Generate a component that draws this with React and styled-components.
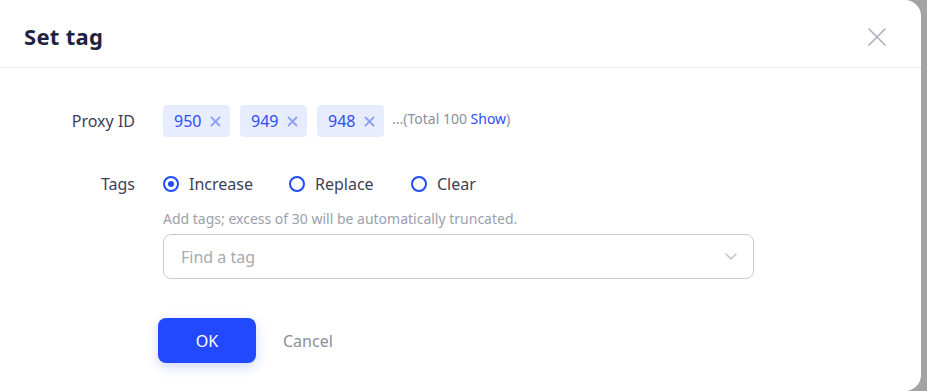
import React from "react";
import styled, { createGlobalStyle } from "styled-components";

const Global = createGlobalStyle`
  html, body { margin: 0; padding: 0; background: #a3a3a3; }
  body { font-family: "Noto Sans", "Open Sans", sans-serif; overflow: hidden; }
`;

const CloseIcon = () => (
  <svg width="20" height="20" viewBox="0 0 20 20" fill="none" stroke="#a9aebb" strokeWidth="1.6" strokeLinecap="round">
    <path d="M2 2L18 18M18 2L2 18" />
  </svg>
);

const SmallX = () => (
  <svg width="11" height="11" viewBox="0 0 11 11" fill="none" stroke="#8ea2f6" strokeWidth="1.8" strokeLinecap="round">
    <path d="M1.5 1.5L9.5 9.5M9.5 1.5L1.5 9.5" />
  </svg>
);

const Chevron = () => (
  <svg width="14" height="9" viewBox="0 0 14 9" fill="none" stroke="#c3c5cc" strokeWidth="1.6" strokeLinecap="round" strokeLinejoin="round">
    <path d="M2 2L7 7L12 2" />
  </svg>
);

const App = () => {
  return (
    <>
      <Global />
      <Dialog>
        <Header>
          <Title>Set tag</Title>
          <CloseBtn><CloseIcon /></CloseBtn>
        </Header>
        <Body>
          <Row>
            <Label>Proxy ID</Label>
            <Field>
              <TagList>
                {["950", "949", "948"].map((id) => (
                  <Tag key={id}>
                    {id}
                    <SmallX />
                  </Tag>
                ))}
                <Total>
                  ...(Total 100 <LinkText>Show</LinkText>)
                </Total>
              </TagList>
            </Field>
          </Row>
          <Row $top={36}>
            <Label>Tags</Label>
            <Field>
              <Radios>
                <RadioItem $w={126}><Radio $checked />Increase</RadioItem>
                <RadioItem $w={122}><Radio />Replace</RadioItem>
                <RadioItem><Radio />Clear</RadioItem>
              </Radios>
            </Field>
          </Row>
          <SubField>
            <Help>Add tags; excess of 30 will be automatically truncated.</Help>
            <Select>
              <Placeholder>Find a tag</Placeholder>
              <Chevron />
            </Select>
          </SubField>
          <Footer>
            <Primary>OK</Primary>
            <Ghost>Cancel</Ghost>
          </Footer>
        </Body>
      </Dialog>
    </>
  );
};

export default App;

const Dialog = styled.div`
  width: 921px;
  height: 391px;
  background: #fff;
  border-radius: 0 16px 16px 0;
  box-sizing: border-box;
  overflow: hidden;
`;

const Header = styled.div`
  height: 68px;
  border-bottom: 1px solid #e9e9ec;
  display: flex;
  align-items: center;
  justify-content: space-between;
  padding: 0 34px 0 24px;
  box-sizing: border-box;
`;

const Title = styled.h1`
  margin: 0;
  font-size: 22px;
  font-weight: 700;
  color: #1e2340;
  padding-top: 4px;
  letter-spacing: 0.3px;
`;

const CloseBtn = styled.div`
  display: flex;
  padding-top: 6px;
`;

const Body = styled.div`
  padding-top: 37px;
`;

const Row = styled.div`
  display: flex;
  align-items: center;
  margin-top: ${(p) => (p.$top ? p.$top : 0)}px;
`;

const Label = styled.div`
  width: 135px;
  text-align: right;
  font-size: 16px;
  color: #3c4156;
  flex-shrink: 0;
`;

const Field = styled.div`
  margin-left: 28px;
  flex: 1;
`;

const TagList = styled.div`
  display: flex;
  align-items: center;
  gap: 10px;
`;

const Tag = styled.div`
  display: flex;
  align-items: center;
  gap: 9px;
  height: 32px;
  width: 67px;
  box-sizing: border-box;
  padding-left: 11px;
  background: #e7ecff;
  border-radius: 4px;
  color: #2d4df5;
  font-size: 16px;
`;

const Total = styled.span`
  font-size: 14px;
  color: #8b8f9e;
  margin-left: -2px;
  margin-top: -6px;
`;

const LinkText = styled.span`
  color: #2d4df5;
`;

const Radios = styled.div`
  display: flex;
  align-items: center;
`;

const RadioItem = styled.label`
  display: flex;
  align-items: center;
  gap: 10px;
  width: ${(p) => (p.$w ? `${p.$w}px` : "auto")};
  font-size: 16px;
  color: #3c4156;
`;

const Radio = styled.span`
  width: 16px;
  height: 16px;
  box-sizing: border-box;
  border-radius: 50%;
  border: 2px solid #2349ff;
  display: flex;
  align-items: center;
  justify-content: center;
  &::after {
    content: "";
    width: 6px;
    height: 6px;
    border-radius: 50%;
    background: ${(p) => (p.$checked ? "#2349ff" : "transparent")};
  }
`;

const SubField = styled.div`
  margin-left: 163px;
  width: 591px;
  margin-top: 15px;
`;

const Help = styled.div`
  font-size: 14px;
  color: #9b9fab;
  line-height: 18px;
`;

const Select = styled.div`
  margin-top: 6px;
  height: 45px;
  box-sizing: border-box;
  border: 1px solid #c9cbd2;
  border-radius: 8px;
  display: flex;
  align-items: center;
  justify-content: space-between;
  padding: 0 15px 0 17px;
`;

const Placeholder = styled.span`
  font-size: 16px;
  color: #a7aab3;
`;

const Footer = styled.div`
  display: flex;
  align-items: center;
  margin: 39px 0 0 158px;
  gap: 27px;
`;

const Primary = styled.button`
  width: 98px;
  height: 45px;
  border: none;
  border-radius: 8px;
  background: #2349ff;
  color: #fff;
  font-family: inherit;
  font-size: 16px;
  box-shadow: 0 4px 12px rgba(35, 73, 255, 0.22);
`;

const Ghost = styled.button`
  border: none;
  background: none;
  padding: 0;
  font-family: inherit;
  font-size: 16px;
  color: #8b8f9c;
`;
